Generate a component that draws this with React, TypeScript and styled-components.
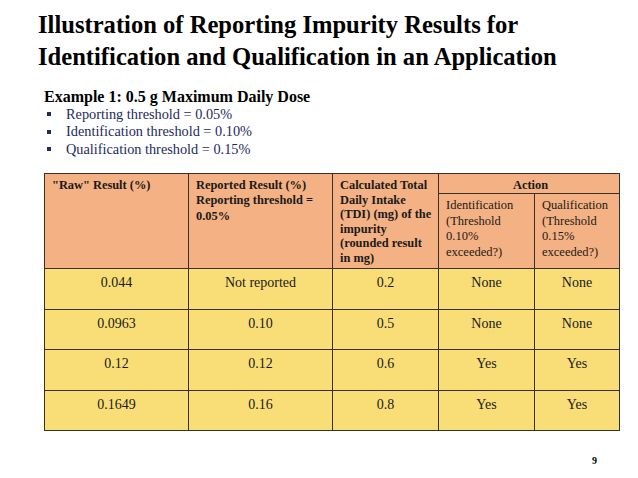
import React from "react";
import styled, { createGlobalStyle } from "styled-components";

const GlobalStyle = createGlobalStyle`
  html, body {
    margin: 0;
    padding: 0;
    background: #ffffff;
  }
  body {
    font-family: "Liberation Serif", "Times New Roman", serif;
  }
`;

const Slide = styled.div`
  width: 638px;
  height: 478px;
  box-sizing: border-box;
  padding: 9px 19px 11px 38px;
  display: flex;
  flex-direction: column;
  color: #000;
`;

const Title = styled.h1`
  margin: 0;
  font-size: 24.6px;
  line-height: 32px;
  font-weight: bold;
`;

const Subtitle = styled.h2`
  margin: 15.6px 0 0 6px;
  font-size: 16px;
  line-height: 16px;
  font-weight: bold;
`;

const BulletList = styled.ul`
  margin: 1px 0 0 9px;
  padding: 0;
  list-style: none;
`;

const Bullet = styled.li`
  display: flex;
  align-items: center;
  font-size: 14.3px;
  line-height: 17.5px;
  color: #1c2a5e;
  &::before {
    content: "";
    width: 4px;
    height: 4px;
    background: #1c2a5e;
    margin: 0 15px 0 0;
  }
`;

const Table = styled.table`
  margin: 15px 0 0 6px;
  width: 575px;
  border-collapse: collapse;
  table-layout: fixed;
`;

const HeadCell = styled.th<{ $bold?: boolean; $center?: boolean }>`
  background: #f4b183;
  border: 1.5px solid #3a3024;
  padding: 4px 4px 0 7px;
  text-align: ${(p) => (p.$center ? "center" : "left")};
  vertical-align: top;
  font-size: ${(p) => (p.$bold ? "12.4px" : "12.5px")};
  line-height: ${(p) => (p.$bold ? "15.3px" : "15.5px")};
  font-weight: ${(p) => (p.$bold ? "bold" : "normal")};
  color: #1a1a1a;
  white-space: nowrap;
`;

const Row = styled.tr`
  height: 40.5px;
`;

const Cell = styled.td`
  background: #f9de78;
  border: 1.5px solid #3a3024;
  padding: 5px 4px 0 4px;
  text-align: center;
  vertical-align: top;
  font-size: 14px;
  line-height: 17px;
  color: #1a1a1a;
`;

const Footer = styled.div`
  margin-top: auto;
  text-align: right;
  font-size: 10px;
  line-height: 12px;
  font-weight: bold;
  padding-right: 22px;
`;

const rows = [
  ["0.044", "Not reported", "0.2", "None", "None"],
  ["0.0963", "0.10", "0.5", "None", "None"],
  ["0.12", "0.12", "0.6", "Yes", "Yes"],
  ["0.1649", "0.16", "0.8", "Yes", "Yes"],
];

const lines = (items: string[]) =>
  items.map((t, i) => (
    <React.Fragment key={i}>
      {i > 0 && <br />}
      {t}
    </React.Fragment>
  ));

function App() {
  return (
    <>
      <GlobalStyle />
      <Slide>
        <Title>
          Illustration of Reporting Impurity Results for
          <br />
          Identification and Qualification in an Application
        </Title>
        <Subtitle>Example 1: 0.5 g Maximum Daily Dose</Subtitle>
        <BulletList>
          <Bullet>Reporting threshold = 0.05%</Bullet>
          <Bullet>Identification threshold = 0.10%</Bullet>
          <Bullet>Qualification threshold = 0.15%</Bullet>
        </BulletList>
        <Table>
          <colgroup>
            <col style={{ width: 144 }} />
            <col style={{ width: 144 }} />
            <col style={{ width: 106 }} />
            <col style={{ width: 96 }} />
            <col style={{ width: 85 }} />
          </colgroup>
          <thead>
            <tr style={{ height: 20 }}>
              <HeadCell $bold rowSpan={2}>
                "Raw" Result (%)
              </HeadCell>
              <HeadCell $bold rowSpan={2}>
                {lines(["Reported Result (%)", "Reporting threshold =", "0.05%"])}
              </HeadCell>
              <HeadCell $bold rowSpan={2} style={{ lineHeight: "14.6px" }}>
                {lines([
                  "Calculated Total",
                  "Daily Intake",
                  "(TDI) (mg) of the",
                  "impurity",
                  "(rounded result",
                  "in mg)",
                ])}
              </HeadCell>
              <HeadCell $bold $center colSpan={2}>
                Action
              </HeadCell>
            </tr>
            <tr style={{ height: 75 }}>
              <HeadCell>
                {lines(["Identification", "(Threshold", "0.10%", "exceeded?)"])}
              </HeadCell>
              <HeadCell>
                {lines(["Qualification", "(Threshold", "0.15%", "exceeded?)"])}
              </HeadCell>
            </tr>
          </thead>
          <tbody>
            {rows.map((r, i) => (
              <Row key={i}>
                {r.map((c, j) => (
                  <Cell key={j}>{c}</Cell>
                ))}
              </Row>
            ))}
          </tbody>
        </Table>
        <Footer>9</Footer>
      </Slide>
    </>
  );
}

export default App;
